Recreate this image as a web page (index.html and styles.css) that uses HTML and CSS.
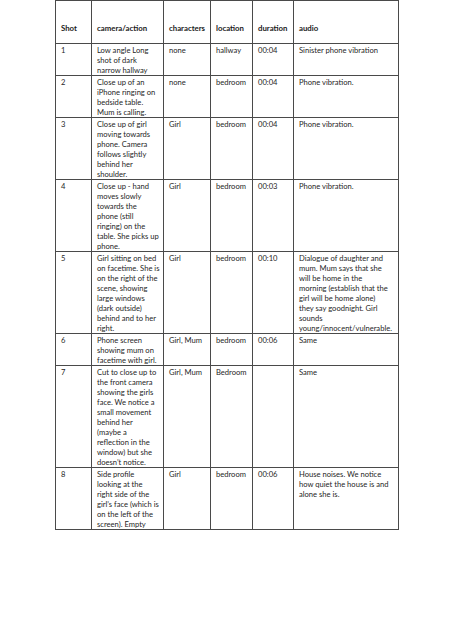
FILE: index.html
```html
<!DOCTYPE html>
<html>
<head>
<meta charset="utf-8">
<link rel="stylesheet" href="styles.css">
</head>
<body>
<table class="shots">
  <colgroup>
    <col class="c-shot"><col class="c-cam"><col class="c-char"><col class="c-loc"><col class="c-dur"><col class="c-aud">
  </colgroup>
  <thead>
    <tr class="head">
      <th>Shot</th><th>camera/action</th><th>characters</th><th>location</th><th>duration</th><th>audio</th>
    </tr>
  </thead>
  <tbody>
    <tr>
      <td>1</td>
      <td>Low angle Long<br>shot of dark<br>narrow hallway</td>
      <td>none</td><td>hallway</td><td>00:04</td>
      <td>Sinister phone vibration</td>
    </tr>
    <tr>
      <td>2</td>
      <td>Close up of an<br>iPhone ringing on<br>bedside table.<br>Mum is calling.</td>
      <td>none</td><td>bedroom</td><td>00:04</td>
      <td>Phone vibration.</td>
    </tr>
    <tr>
      <td>3</td>
      <td>Close up of girl<br>moving towards<br>phone. Camera<br>follows slightly<br>behind her<br>shoulder.</td>
      <td>Girl</td><td>bedroom</td><td>00:04</td>
      <td>Phone vibration.</td>
    </tr>
    <tr>
      <td>4</td>
      <td>Close up - hand<br>moves slowly<br>towards the<br>phone (still<br>ringing) on the<br>table. She picks up<br>phone.</td>
      <td>Girl</td><td>bedroom</td><td>00:03</td>
      <td>Phone vibration.</td>
    </tr>
    <tr>
      <td>5</td>
      <td>Girl sitting on bed<br>on facetime. She is<br>on the right of the<br>scene, showing<br>large windows<br>(dark outside)<br>behind and to her<br>right.</td>
      <td>Girl</td><td>bedroom</td><td>00:10</td>
      <td>Dialogue of daughter and<br>mum. Mum says that she<br>will be home in the<br>morning (establish that the<br>girl will be home alone)<br>they say goodnight. Girl<br>sounds<br>young/innocent/vulnerable.</td>
    </tr>
    <tr>
      <td>6</td>
      <td>Phone screen<br>showing mum on<br>facetime with girl.</td>
      <td>Girl, Mum</td><td>bedroom</td><td>00:06</td>
      <td>Same</td>
    </tr>
    <tr>
      <td>7</td>
      <td>Cut to close up to<br>the front camera<br>showing the girls<br>face. We notice a<br>small movement<br>behind her<br>(maybe a<br>reflection in the<br>window) but she<br>doesn’t notice.</td>
      <td>Girl, Mum</td><td>Bedroom</td><td></td>
      <td>Same</td>
    </tr>
    <tr>
      <td>8</td>
      <td>Side profile<br>looking at the<br>right side of the<br>girl’s face (which is<br>on the left of the<br>screen). Empty</td>
      <td>Girl</td><td>bedroom</td><td>00:06</td>
      <td>House noises. We notice<br>how quiet the house is and<br>alone she is.</td>
    </tr>
  </tbody>
</table>
</body>
</html>
```

FILE: styles.css
```css
html, body {
  margin: 0;
  padding: 0;
  background: #ffffff;
}

body {
  font-family: Lato, "Open Sans", "Liberation Sans", sans-serif;
  font-size: 7.6px;
  line-height: 10px;
  color: #262626;
}

.shots {
  margin-left: 55px;
  border-collapse: collapse;
  table-layout: fixed;
  width: 343px;
}

.c-shot { width: 36px; }
.c-cam { width: 72px; }
.c-char { width: 47px; }
.c-loc { width: 42px; }
.c-dur { width: 41px; }
.c-aud { width: 105px; }

.shots th,
.shots td {
  border: 1px solid #4a4a4a;
  padding: 1px 2px 0 5px;
  vertical-align: top;
  text-align: left;
  white-space: nowrap;
  overflow: hidden;
}

.shots th {
  font-weight: 700;
  font-size: 7.8px;
  color: #1a1a1a;
  height: 43px;
  box-sizing: border-box;
  padding-top: 22px;
}

.shots tbody td {
  font-weight: 400;
}
```
